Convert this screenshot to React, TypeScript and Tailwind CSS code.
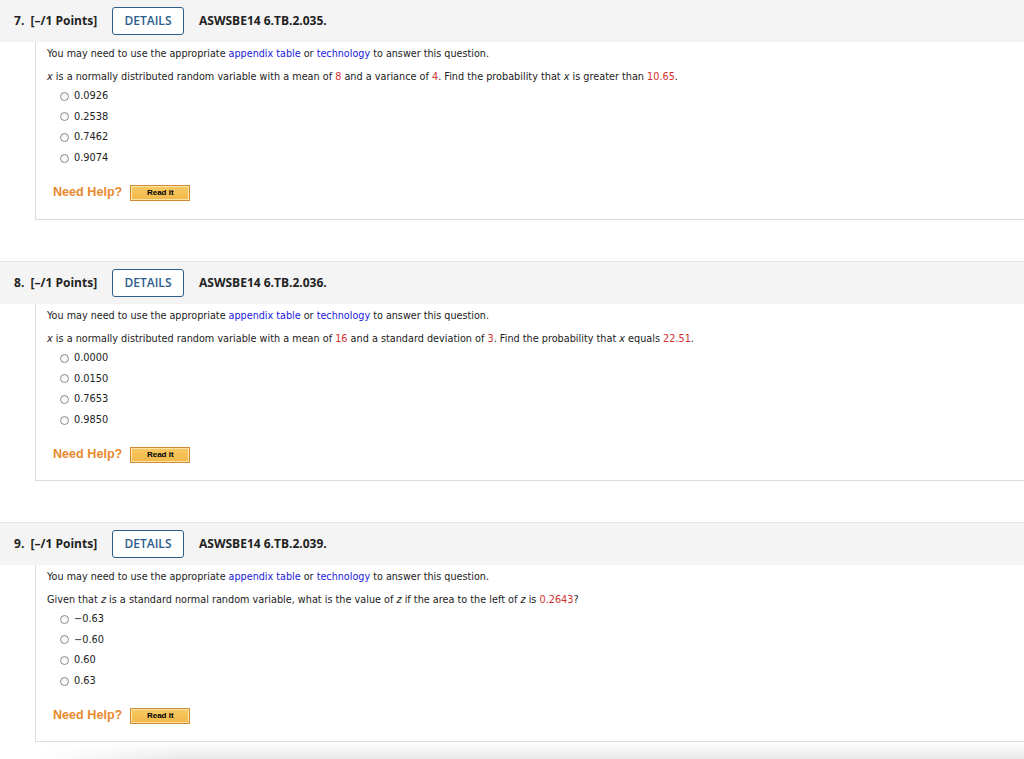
import React from "react";

const V = { fontFamily: '"DejaVu Sans", Verdana, sans-serif' };
const OS = { fontFamily: '"Open Sans", "Noto Sans", sans-serif' };
const AR = { fontFamily: '"Liberation Sans", Arial, sans-serif' };

function Radio({ label }: { label: string }) {
  return (
    <div className="h-[20.67px] flex items-center pl-[13px]">
      <span className="w-[9px] h-[9px] rounded-full border border-[#8a8a8a] bg-gradient-to-b from-[#f2f2f2] to-white inline-block" />
      <span className="ml-[5px] text-[9.8px] text-[#222]" style={V}>
        {label}
      </span>
    </div>
  );
}

function Red({ children }: { children: React.ReactNode }) {
  return <span className="text-[#d3302f]">{children}</span>;
}

function Q({
  num,
  code,
  question,
  options,
  top,
}: {
  num: string;
  code: string;
  question: React.ReactNode;
  options: string[];
  top: boolean;
}) {
  return (
    <section className={top ? "" : "mt-[41px]"}>
      <div
        className={
          "bg-[#f4f4f4] flex items-center pl-[14px] " + (top ? "h-[42px]" : "h-[43px] border-t border-[#e4e4e4]")
        }
      >
        <span className="text-[12px] font-bold text-[#222] w-[98px] whitespace-pre" style={OS}>
          {num}.  [–/1 Points]
        </span>
        <span
          className="h-[28px] w-[72px] flex items-center justify-center border border-[#2c5d8d] rounded-[3px] bg-white text-[12px] font-semibold text-[#2c5d8d]"
          style={OS}
        >
          DETAILS
        </span>
        <span className="ml-[15px] text-[12px] font-bold text-[#222]" style={OS}>
          {code}
        </span>
      </div>
      <div
        className={
          "ml-[35px] border-l border-b border-[#dcdcdc] pl-[11px] pt-[4px] " + (top ? "h-[178px]" : "h-[177px]")
        }
      >
        <div className="h-[16px] leading-[16px] text-[9.65px] text-[#222]" style={V}>
          You may need to use the appropriate <span className="text-[#1a1adb]">appendix table</span> or{" "}
          <span className="text-[#1a1adb]">technology</span> to answer this question.
        </div>
        <div className="mt-[7px] mb-[1px] h-[16px] leading-[16px] text-[9.7px] text-[#222]" style={V}>
          {question}
        </div>
        {options.map((o) => (
          <Radio key={o} label={o} />
        ))}
        <div className="mt-[16px] h-[16px] flex items-center pl-[6px]">
          <span className="text-[12.6px] font-bold text-[#e8892f]" style={AR}>
            Need Help?
          </span>
          <span className="ml-[8px] w-[60px] h-[16px] border border-[#d48a34] bg-[#fbe3a6] p-[1px] flex">
            <span
              className="flex-1 bg-gradient-to-b from-[#f7c860] to-[#f3b94c] flex items-center justify-center text-[8px] font-bold text-black"
              style={AR}
            >
              Read It
            </span>
          </span>
        </div>
      </div>
    </section>
  );
}

export default function App() {
  return (
    <div className="w-[1024px] h-[759px] bg-white overflow-hidden">
      <Q
        top
        num="7"
        code="ASWSBE14 6.TB.2.035."
        options={["0.0926", "0.2538", "0.7462", "0.9074"]}
        question={
          <>
            <i>x</i> is a normally distributed random variable with a mean of <Red>8</Red> and a variance of <Red>4</Red>.
            Find the probability that <i>x</i> is greater than <Red>10.65</Red>.
          </>
        }
      />
      <Q
        top={false}
        num="8"
        code="ASWSBE14 6.TB.2.036."
        options={["0.0000", "0.0150", "0.7653", "0.9850"]}
        question={
          <>
            <i>x</i> is a normally distributed random variable with a mean of <Red>16</Red> and a standard deviation of{" "}
            <Red>3</Red>. Find the probability that <i>x</i> equals <Red>22.51</Red>.
          </>
        }
      />
      <Q
        top={false}
        num="9"
        code="ASWSBE14 6.TB.2.039."
        options={["\u22120.63", "\u22120.60", "0.60", "0.63"]}
        question={
          <>
            Given that <i>z</i> is a standard normal random variable, what is the value of <i>z</i> if the area to the left
            of <i>z</i> is <Red>0.2643</Red>?
          </>
        }
      />
      <div className="h-[17px] ml-[40px] bg-gradient-to-b from-white to-[#e9e9e9] [mask-image:linear-gradient(to_right,transparent,black_140px)]" />
    </div>
  );
}
